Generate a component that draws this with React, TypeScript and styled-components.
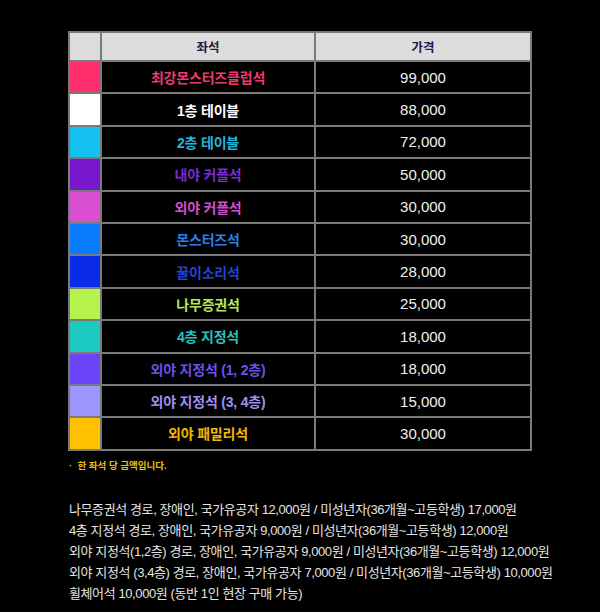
import React from 'react';
import styled, { createGlobalStyle } from 'styled-components';

const GlobalStyle = createGlobalStyle`
  html, body {
    margin: 0;
    padding: 0;
    background: #000;
  }
  body {
    font-family: 'Liberation Sans', 'Noto Sans CJK KR', sans-serif;
  }
`;

type Seat = {
  name: string;
  price: string;
  swatch: string;
  text: string;
};

const seats: Seat[] = [
  { name: '최강몬스터즈클럽석', price: '99,000', swatch: '#ff2f6d', text: '#ec3a6e' },
  { name: '1층 테이블', price: '88,000', swatch: '#ffffff', text: '#ffffff' },
  { name: '2층 테이블', price: '72,000', swatch: '#14c0ef', text: '#27b4dc' },
  { name: '내야 커플석', price: '50,000', swatch: '#7817cc', text: '#7a2ccf' },
  { name: '외야 커플석', price: '30,000', swatch: '#d94fd0', text: '#d24fcb' },
  { name: '몬스터즈석', price: '30,000', swatch: '#0a7dff', text: '#2b7fe2' },
  { name: '꿀이소리석', price: '28,000', swatch: '#0a2ce6', text: '#2343d6' },
  { name: '나무증권석', price: '25,000', swatch: '#b6f44d', text: '#b5e655' },
  { name: '4층 지정석', price: '18,000', swatch: '#1ccac1', text: '#27c3bc' },
  { name: '외야 지정석 (1, 2층)', price: '18,000', swatch: '#6a44f6', text: '#704ee9' },
  { name: '외야 지정석 (3, 4층)', price: '15,000', swatch: '#9c96ff', text: '#9c90f0' },
  { name: '외야 패밀리석', price: '30,000', swatch: '#ffc000', text: '#f0b800' },
];

const notes = [
  '나무증권석 경로, 장애인, 국가유공자 12,000원 / 미성년자(36개월~고등학생) 17,000원',
  '4층 지정석 경로, 장애인, 국가유공자 9,000원 / 미성년자(36개월~고등학생) 12,000원',
  '외야 지정석(1,2층) 경로, 장애인, 국가유공자 9,000원 / 미성년자(36개월~고등학생) 12,000원',
  '외야 지정석 (3,4층) 경로, 장애인, 국가유공자 7,000원 / 미성년자(36개월~고등학생) 10,000원',
  '휠체어석 10,000원 (동반 1인 현장 구매 가능)',
];

const Page = styled.div`
  width: 600px;
  height: 612px;
  background: #000;
  padding: 31px 0 0 68px;
  box-sizing: border-box;
  overflow: hidden;
`;

const PriceTable = styled.div`
  display: grid;
  grid-template-columns: 30px 212px 214px;
  grid-template-rows: 27px;
  grid-auto-rows: 30.4px;
  gap: 2px;
  width: 464px;
  box-sizing: border-box;
  border: 2px solid #7a7a7a;
  background: #7a7a7a;
`;

const HeadCell = styled.div`
  background: #dcdcdc;
  display: flex;
  align-items: center;
  justify-content: center;
  color: #1c2048;
  font-size: 12.5px;
  font-weight: 700;
`;

const Swatch = styled.div<{ $color: string }>`
  background: ${(p) => p.$color};
`;

const SeatCell = styled.div<{ $color: string }>`
  background: #000;
  display: flex;
  align-items: center;
  justify-content: center;
  color: ${(p) => p.$color};
  font-size: 14px;
  font-weight: 700;
  letter-spacing: -0.2px;
`;

const PriceCell = styled.div`
  background: #000;
  display: flex;
  align-items: center;
  justify-content: center;
  color: #f0f0f0;
  font-size: 15px;
`;

const Footnote = styled.div`
  margin-top: 7px;
  color: #e8c300;
  font-size: 9.5px;
  font-weight: 700;
  padding-left: 1px;
`;

const Notes = styled.div`
  margin-top: 27px;
  padding-left: 1px;
  color: #e4e4e4;
  font-size: 13px;
  line-height: 21px;
  letter-spacing: -0.4px;
  white-space: nowrap;
`;

export default function App() {
  return (
    <Page>
      <GlobalStyle />
      <PriceTable>
        <HeadCell />
        <HeadCell>좌석</HeadCell>
        <HeadCell>가격</HeadCell>
        {seats.map((s) => (
          <React.Fragment key={s.name}>
            <Swatch $color={s.swatch} />
            <SeatCell $color={s.text}>{s.name}</SeatCell>
            <PriceCell>{s.price}</PriceCell>
          </React.Fragment>
        ))}
      </PriceTable>
      <Footnote>· &nbsp;한 좌석 당 금액입니다.</Footnote>
      <Notes>
        {notes.map((n) => (
          <div key={n}>{n}</div>
        ))}
      </Notes>
    </Page>
  );
}
